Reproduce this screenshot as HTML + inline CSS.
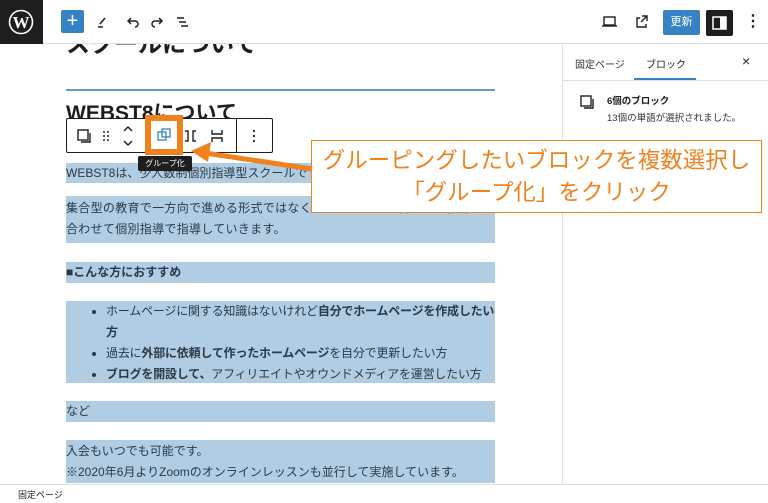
<!DOCTYPE html>
<html><head><meta charset="utf-8"><style>
*{margin:0;padding:0;box-sizing:border-box}
body{width:768px;height:503px;overflow:hidden;background:#fff;font-family:"Liberation Sans","Noto Sans CJK JP",sans-serif;color:#1e1e1e;position:relative}
.abs{position:absolute}
.blk{position:absolute;left:66px;width:429px;background:#b0cde3;font-size:12px;line-height:21px;color:#2a3a48;padding-left:0}
b{font-weight:700}
.top{z-index:10}
.tb{z-index:6}
</style></head><body>
<!-- content heading (under header) -->
<div class="abs" style="left:66px;top:30px;font-size:24px;font-weight:700;line-height:30px">スクールについて</div>
<!-- top bar -->
<div class="abs top" style="left:0;top:0;width:768px;height:44px;border-bottom:1px solid #e0e0e0;background:#fff"></div>
<div class="abs top" style="left:0;top:0;width:43px;height:44px;background:#1e1e1e"></div>
<svg class="abs top" style="left:8px;top:9px" width="26" height="26" viewBox="0 0 26 26"><circle cx="13" cy="13" r="11.5" fill="none" stroke="#fff" stroke-width="1.6"/><text x="13" y="19" text-anchor="middle" font-family="Liberation Serif" font-weight="700" font-size="17" fill="#fff">W</text></svg>
<div class="abs top" style="left:61px;top:10px;width:23px;height:23px;background:#3582c4;border-radius:2px;color:#fff;font-size:20px;line-height:22px;text-align:center">+</div>
<svg class="abs top" style="left:95px;top:12px" width="100" height="20" viewBox="0 0 100 20" fill="none" stroke="#1e1e1e" stroke-width="1.5"><path d="M5 12l5-6"/><path d="M3 15h5"/><path d="M34 9h6a3 3 0 010 6" /><path d="M36 6l-3 3 3 3"/><path d="M66 9h-6a3 3 0 000 6"/><path d="M64 6l3 3-3 3"/><path d="M82 6h7M84 10h7M86 14h7"/></svg>
<svg class="abs top" style="left:600px;top:12px" width="60" height="20" viewBox="0 0 60 20" fill="none" stroke="#1e1e1e" stroke-width="1.4"><rect x="4" y="5" width="11" height="8"/><path d="M2 14h15"/><path d="M40 6h-3v9h9v-3"/><path d="M42 4h5v5M47 4l-6 6"/></svg>
<div class="abs top" style="left:663px;top:10px;width:37px;height:25px;background:#3582c4;color:#fff;font-size:11px;line-height:25px;text-align:center;border-radius:2px">更新</div>
<div class="abs top" style="left:706px;top:10px;width:27px;height:26px;background:#1e1e1e;border-radius:2px"></div>
<svg class="abs top" style="left:711px;top:15px" width="17" height="16"><rect x="2" y="2" width="13" height="12" fill="none" stroke="#fff" stroke-width="1.5"/><rect x="9" y="2" width="6" height="12" fill="#fff"/></svg>
<div class="abs top" style="left:745px;top:12px;font-size:16px;line-height:20px;font-weight:700">⋮</div>
<!-- sidebar -->
<div class="abs" style="left:562px;top:45px;width:206px;height:440px;border-left:1px solid #e0e0e0"></div>
<div class="abs" style="left:562px;top:80px;width:206px;height:1px;background:#e0e0e0"></div>
<div class="abs" style="left:575px;top:56px;font-size:10px;color:#333">固定ページ</div>
<div class="abs" style="left:646px;top:56px;font-size:10px;color:#1e1e1e">ブロック</div>
<div class="abs" style="left:634px;top:78px;width:62px;height:2px;background:#3582c4"></div>
<div class="abs" style="left:742px;top:53px;font-size:14px">×</div>
<svg class="abs" style="left:578px;top:93px" width="18" height="18" fill="none" stroke="#1e1e1e" stroke-width="1.4"><rect x="3" y="3" width="10" height="10"/><path d="M15 6v9H6"/></svg>
<div class="abs" style="left:607px;top:93px;font-size:9.5px;font-weight:700">6個のブロック</div>
<div class="abs" style="left:607px;top:110px;font-size:9.5px;color:#333">13個の単語が選択されました。</div>
<div class="abs" style="left:66px;top:89px;width:429px;height:2px;background:#6e96c4"></div>
<div class="abs" style="left:66px;top:100px;font-size:21px;font-weight:700;line-height:28px">WEBST8について</div>
<!-- blocks -->
<div class="blk" style="top:163px;height:20px;line-height:20px">WEBST8は、少人数制個別指導型スクールです。</div>
<div class="blk" style="top:196px;height:47px;padding-top:2px;letter-spacing:0.3px">集合型の教育で一方向で進める形式ではなく、一人ひとりに合わせた指導で合わせて個別指導で指導していきます。</div>
<div class="blk" style="top:262px;height:21px"><b>■こんな方におすすめ</b></div>
<div class="blk" style="top:301px;height:82px;padding:0 0 0 40px;letter-spacing:-0.2px"><ul style="list-style:disc;line-height:21px">
<li>ホームページに関する知識はないけれど<b>自分でホームページを作成したい</b><br><b>方</b></li>
<li>過去に<b>外部に依頼して作ったホームページ</b>を自分で更新したい方</li>
<li><b>ブログを開設して、</b>アフィリエイトやオウンドメディアを運営したい方</li></ul></div>
<div class="blk" style="top:401px;height:21px">など</div>
<div class="blk" style="top:440px;height:43px;padding-top:1px">入会もいつでも可能です。<br>※2020年6月よりZoomのオンラインレッスンも並行して実施しています。</div>
<!-- toolbar -->
<div class="abs tb" style="left:66px;top:118px;width:207px;height:35px;background:#fff;border:1px solid #1e1e1e;border-radius:2px"></div>
<div class="abs tb" style="left:236px;top:118px;width:1px;height:35px;background:#1e1e1e"></div>
<svg class="abs tb" style="left:66px;top:118px" width="210" height="36" fill="none" stroke="#1e1e1e" stroke-width="1.4"><rect x="12" y="12" width="10" height="10"/><path d="M24 15v9H15"/><g fill="#1e1e1e" stroke="none"><circle cx="38" cy="14" r="1"/><circle cx="42" cy="14" r="1"/><circle cx="38" cy="18" r="1"/><circle cx="42" cy="18" r="1"/><circle cx="38" cy="22" r="1"/><circle cx="42" cy="22" r="1"/></g><path d="M58 13l4-4 4 4M58 23l4 4 4-4"/><path d="M119 13h3v10h-3M130 13h-3v10h3"/><path d="M146 12v4h10v-4M146 24v-4h10v4"/><g fill="#1e1e1e" stroke="none"><circle cx="188" cy="13" r="1.1"/><circle cx="188" cy="18" r="1.1"/><circle cx="188" cy="23" r="1.1"/></g></svg>
<div class="abs tb" style="left:145px;top:115px;width:38px;height:40px;border:6px solid #f0821e;background:#fff"></div>
<svg class="abs tb" style="left:155px;top:126px" width="18" height="18" fill="none" stroke="#3582c4" stroke-width="1.3"><rect x="3" y="6" width="8" height="8"/><rect x="7" y="3" width="8" height="8"/></svg>
<div class="abs tb" style="left:138px;top:156px;width:54px;height:15px;background:#1e1e1e;color:#fff;font-size:8px;line-height:15px;text-align:center;border-radius:2px">グループ化</div>
<!-- status -->
<div class="abs" style="left:0;top:484px;width:768px;height:19px;background:#fff;border-top:1px solid #e0e0e0"></div>
<div class="abs" style="left:18px;top:488px;font-size:9px">固定ページ</div>
<!-- callout -->
<div class="abs tb" style="left:311px;top:140px;width:451px;height:73px;background:#fff;border:1.5px solid #f0821e;color:#f0821e;font-size:22.5px;line-height:32px;text-align:center;padding-top:4px">グルーピングしたいブロックを複数選択し<br>「グループ化」をクリック</div>
<svg class="abs tb" style="left:185px;top:140px" width="130" height="40"><path d="M20 13L127 29" stroke="#f0821e" stroke-width="5"/><path d="M6 11L26 2L23 22Z" fill="#f0821e"/></svg>
</body></html>
